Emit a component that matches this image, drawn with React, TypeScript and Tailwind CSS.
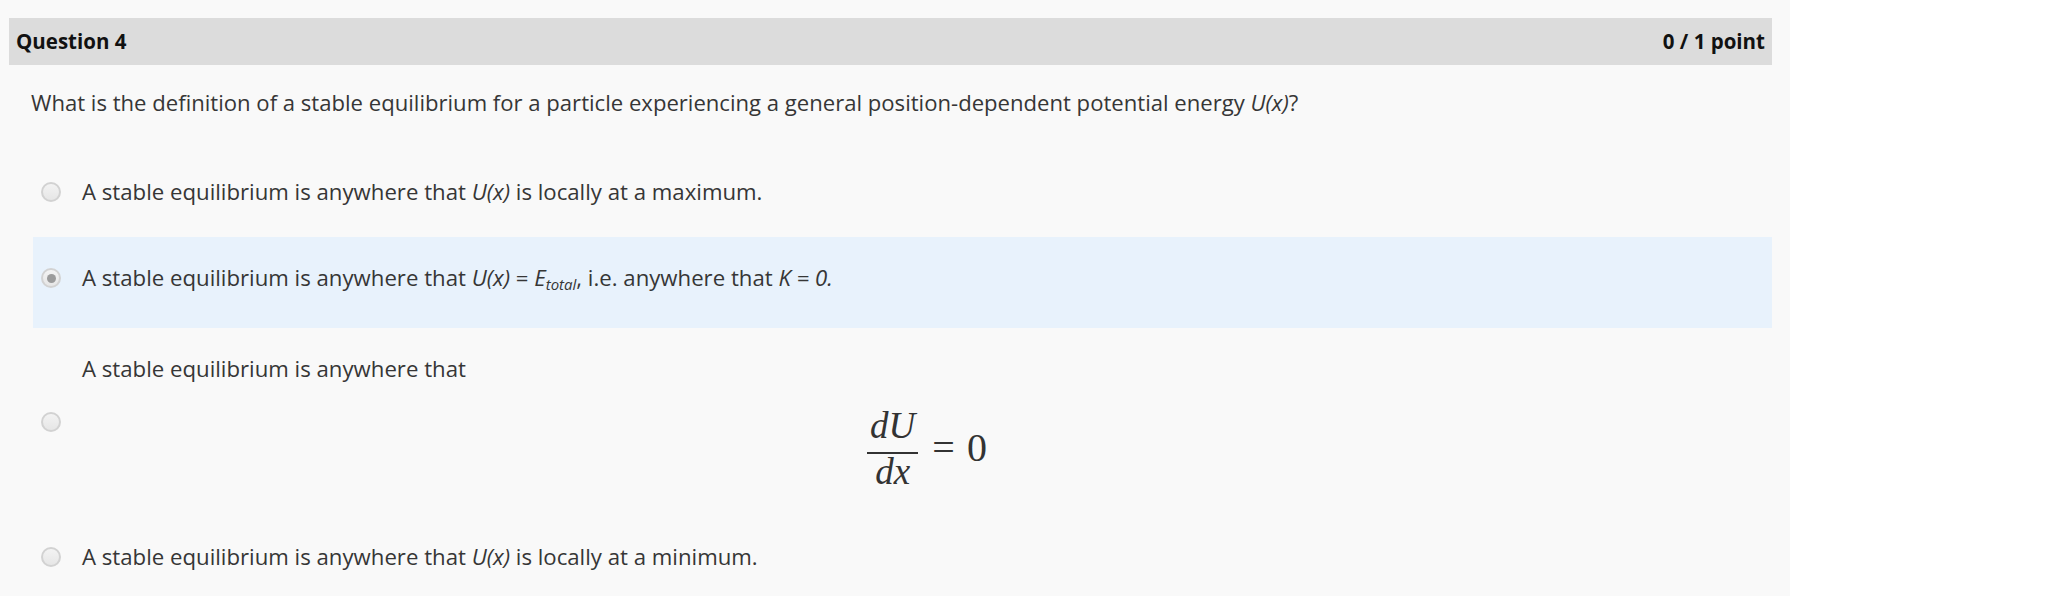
import React from "react";

const options = [
  { id: 1, selected: false },
  { id: 2, selected: true },
  { id: 3, selected: false },
  { id: 4, selected: false },
];

function Radio({ checked }: { checked: boolean }) {
  return (
    <span className="shrink-0 w-[20px] h-[20px] rounded-full border-2 border-[#d2d2d2] bg-linear-to-b from-[#f3f3f3] to-[#e6e6e6] flex items-center justify-center">
      {checked && <span className="w-[9px] h-[9px] rounded-full bg-[#9b9b9b]" />}
    </span>
  );
}

function Ux() {
  return <i>U(x)</i>;
}

// display math: dU/dx = 0
function Fraction() {
  return (
    <div className="flex justify-center mt-[22px] font-['Liberation_Serif',serif] text-[#333]">
      <div className="flex items-center gap-[14px]">
        <div className="flex flex-col items-center text-[37px]">
          <span className="italic leading-[40px] pb-[6px] px-[3px]">dU</span>
          <span className="w-full border-t-[2px] border-[#333]" />
          <span className="italic leading-[36px] px-[3px]">dx</span>
        </div>
        <div className="flex items-center gap-[12px] text-[40px] leading-[40px]">
          <span>=</span>
          <span>0</span>
        </div>
      </div>
    </div>
  );
}

function OptionRow({ id, selected }: { id: number; selected: boolean }) {
  let body: React.ReactNode = null;
  let pad = "pt-[26px] pb-[30px]";
  if (id === 1) {
    body = (
      <p>
        A stable equilibrium is anywhere that <Ux /> is locally at a maximum.
      </p>
    );
  } else if (id === 2) {
    pad = "pt-[26px] pb-[35px]";
    body = (
      <p>
        A stable equilibrium is anywhere that <Ux /> = <i>E</i>
        <sub className="italic text-[15px] leading-[0]">total</sub>, i.e. anywhere that{" "}
        <i>K = 0.</i>
      </p>
    );
  } else if (id === 3) {
    pad = "pt-[26px] pb-[26px]";
    body = (
      <div>
        <p>A stable equilibrium is anywhere that</p>
        <Fraction />
      </div>
    );
  } else {
    body = (
      <p>
        A stable equilibrium is anywhere that <Ux /> is locally at a minimum.
      </p>
    );
  }

  return (
    <div
      className={
        "flex items-center gap-[21px] pl-[8px] " + pad + (selected ? " bg-[#e8f2fc]" : "")
      }
    >
      <Radio checked={selected} />
      <div className="flex-1">{body}</div>
    </div>
  );
}

export default function App() {
  return (
    <div className="flex w-[2046px] h-[596px] overflow-hidden bg-white font-['Open_Sans',sans-serif]">
      <div className="w-[1790px] bg-[#f9f9f9] pt-[18px] pl-[9px] pr-[18px]">
        <div className="h-[47px] bg-[#dcdcdc] flex items-center justify-between px-[7px] text-[20.5px] font-bold text-[#111]">
          <span>Question 4</span>
          <span>0 / 1 point</span>
        </div>

        <p className="mt-[22px] px-[22px] text-[22.1px] leading-[30px] text-[#363636]">
          What is the definition of a stable equilibrium for a particle experiencing a general
          position-dependent potential energy <Ux />?
        </p>

        <div className="mt-[34px] ml-[24px] text-[22.2px] leading-[30px] text-[#363636]">
          {options.map((o) => (
            <OptionRow key={o.id} id={o.id} selected={o.selected} />
          ))}
        </div>
      </div>
    </div>
  );
}
